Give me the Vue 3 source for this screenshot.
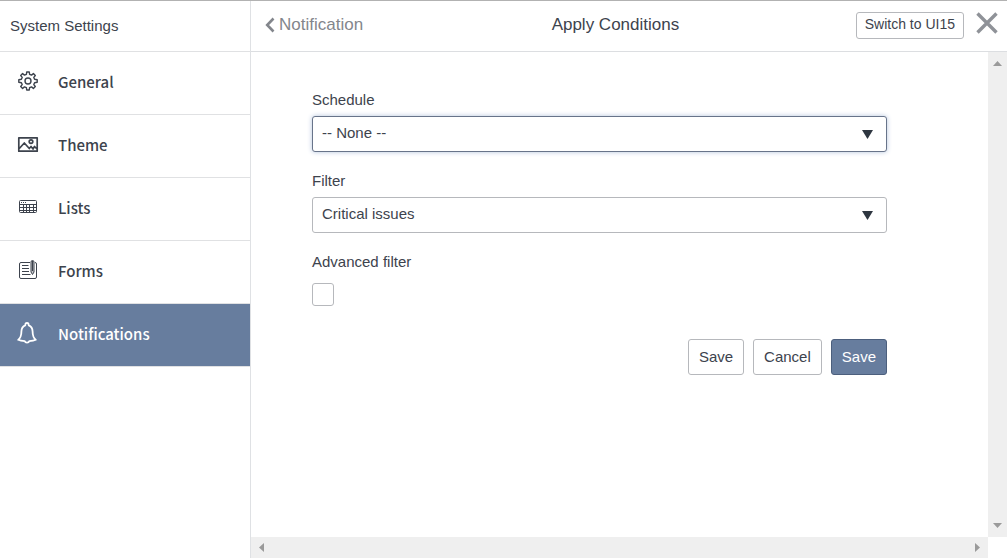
<script setup>
import { ref } from 'vue'

const items = ['General', 'Theme', 'Lists', 'Forms', 'Notifications']
const active = ref('Notifications')
const schedule = ref('-- None --')
const filter = ref('Critical issues')
const advanced = ref(false)
</script>

<template>
  <div class="window">
    <aside class="sidebar">
      <h1 class="sidebar-title">System Settings</h1>
      <nav>
        <button
          v-for="item in items"
          :key="item"
          type="button"
          class="nav-item"
          :class="{ active: item === active }"
          @click="active = item"
        >
          <svg class="nav-icon" viewBox="0 0 22 22" aria-hidden="true">
            <g v-if="item === 'General'">
              <path d="M9.4 4.300 9.700 2h2.600l.3 2.300 1.900.8 1.900-1.500 1.900 1.900-1.500 1.900.8 1.900 2.600.4v2.600l-2.600.4-.8 1.900 1.500 1.900-1.900 1.900-1.900-1.500-1.900.8-.3 2.300H9.700l-.3-2.300-1.900-.8-1.900 1.500-1.900-1.900 1.500-1.900-.8-1.900-2.600-.4V9.700l2.600-.4.8-1.900-1.500-1.900 1.900-1.900 1.900 1.500z" />
              <circle cx="11" cy="11" r="3" />
            </g>
            <g v-else-if="item === 'Theme'" class="medium">
              <path d="M1.800 4.800h18.400v13.400H1.800zM2.300 15.500l5-5.500 5 5.500 1.700-2 2 2.500 1.500-2.500 2.500 2.500" />
              <circle cx="14" cy="8.600" r="1.800" />
            </g>
            <g v-else-if="item === 'Lists'" class="thin">
              <rect x="2.500" y="4.500" width="17" height="12" rx="1" />
              <path d="M2.500 8.500h17M2.500 11.500h17M2.500 14.500h17M6.500 8.500v8M9.500 8.500v8M12.500 8.500v8M16.500 8.500v8M4 6.500h1M6 6.500h1M8 6.500h1" />
            </g>
            <g v-else-if="item === 'Forms'" class="thin">
              <path d="M13 3.500H4Q2.500 3.500 2.500 5v13q0 1.500 1.500 1.500h14q1.500 0 1.500-1.500V5q0-1.500-1.500-1.500M5 6.500h6.500M5 9.500h7M5 12.500h7M5 15.500h8.500" />
              <path class="pen" d="M14 3q0-1.500 1.500-1.500T17 3v10l-1.500 2.500L14 13zM15.500 2v10" />
            </g>
            <path
              v-else
              class="bell"
              d="M8.300 3.300Q8.300 1 10 1t1.700 2.300Q15.500 4.600 15.600 9.500c0 5.300 1.200 6.500 3.200 8.300-1.800.9-3.700 1.200-6.500 1.300-.4 1.300-1.200 1.600-2.300 1.600s-1.900-.3-2.300-1.600c-2.800-.1-4.700-.4-6.500-1.300 2-1.800 3.200-3 3.200-8.300Q4.500 4.600 8.300 3.300z"
            />
          </svg>
          <span>{{ item }}</span>
        </button>
      </nav>
    </aside>

    <main class="panel">
      <header class="panel-header">
        <a href="#" class="back">
          <svg viewBox="0 0 10 16" aria-hidden="true"><path d="M8.500 1.500 2.200 8l6.300 6.500" /></svg>
          <span>Notification</span>
        </a>
        <h2>Apply Conditions</h2>
        <button type="button" class="btn switch">Switch to UI15</button>
        <button type="button" class="close" aria-label="Close">
          <svg viewBox="0 0 22 22" aria-hidden="true"><path d="M1.500 1.500l19 19M20.500 1.500l-19 19" /></svg>
        </button>
      </header>

      <div class="scroll-area">
        <form class="form" @submit.prevent>
          <div class="field">
            <label for="schedule">Schedule</label>
            <div class="select-wrap">
              <select id="schedule" v-model="schedule" class="focused">
                <option>-- None --</option>
              </select>
              <svg class="arrow" viewBox="0 0 11 9" aria-hidden="true"><path d="M0 0h11L5.500 9z" /></svg>
            </div>
          </div>
          <div class="field">
            <label for="filter">Filter</label>
            <div class="select-wrap">
              <select id="filter" v-model="filter">
                <option>Critical issues</option>
              </select>
              <svg class="arrow" viewBox="0 0 11 9" aria-hidden="true"><path d="M0 0h11L5.500 9z" /></svg>
            </div>
          </div>
          <div class="field check">
            <label for="advanced">Advanced filter</label>
            <input id="advanced" v-model="advanced" type="checkbox" />
          </div>
          <div class="actions">
            <button type="button" class="btn">Save</button>
            <button type="button" class="btn">Cancel</button>
            <button type="submit" class="btn primary">Save</button>
          </div>
        </form>
        <div class="track vertical" aria-hidden="true">
          <svg viewBox="0 0 9 5"><path d="M0 5h9L4.500 0z" /></svg>
          <svg viewBox="0 0 9 5"><path d="M0 0h9L4.500 5z" /></svg>
        </div>
        <div class="track horizontal" aria-hidden="true">
          <svg viewBox="0 0 5 9"><path d="M5 0v9L0 4.500z" /></svg>
          <svg viewBox="0 0 5 9"><path d="M0 0v9l5-4.500z" /></svg>
        </div>
      </div>
    </main>
  </div>
</template>

<style>
body {
  margin: 0;
  background: #fff;
}
</style>

<style scoped>
* {
  box-sizing: border-box;
}

.window {
  display: flex;
  min-height: 100vh;
  border-top: 1px solid #b2b2b2;
  color: #3d434d;
  font-family: "Liberation Sans", Arial, sans-serif;
  font-size: 15px;
}

button,
select {
  font: inherit;
  color: inherit;
}

.sidebar {
  flex: 0 0 251px;
  border-right: 1px solid #dfe1e4;
}

.sidebar-title {
  margin: 0;
  height: 51px;
  padding-left: 10px;
  border-bottom: 1px solid #e0e1e3;
  font-size: 15px;
  font-weight: 400;
  line-height: 50px;
}

.nav-item {
  display: flex;
  align-items: center;
  gap: 19px;
  width: 100%;
  height: 63px;
  padding: 0 17px 4px;
  border: 0;
  border-bottom: 1px solid #e0e1e3;
  background: #fff;
  font-family: "Noto Sans CJK SC", "Noto Sans", sans-serif;
  font-size: 15px;
  font-weight: 500;
  cursor: pointer;
}

.nav-item.active {
  background: #677d9e;
  color: #fff;
}

.nav-icon {
  flex: none;
  width: 22px;
  height: 22px;
  fill: none;
  stroke: currentColor;
  stroke-width: 1.4;
  stroke-linejoin: round;
}

.medium {
  stroke-width: 1.7;
}

.thin {
  stroke-width: 1;
}

.pen {
  fill: #c4c6ca;
}

.bell {
  stroke-width: 1.8;
}

.panel {
  display: flex;
  flex: 1;
  flex-direction: column;
  min-width: 0;
}

.panel-header {
  display: flex;
  align-items: center;
  height: 51px;
  padding: 0 9px 2px 14px;
  border-bottom: 1px solid #dcdee1;
}

.back {
  display: flex;
  align-items: center;
  gap: 4px;
  color: #83868c;
  font-size: 17px;
  text-decoration: none;
}

.back svg {
  width: 10px;
  height: 16px;
  fill: none;
  stroke: currentColor;
  stroke-width: 2.6;
}

h2 {
  flex: 1;
  margin: 0;
  padding-left: 12px;
  font-size: 17px;
  font-weight: 400;
  text-align: center;
}

.btn {
  height: 36px;
  padding: 0 10px 2px;
  border: 1px solid #b6b8bc;
  border-radius: 3px;
  background: #fff;
  cursor: pointer;
}

.btn.switch {
  height: 27px;
  padding: 0 8px 2px;
  font-size: 14px;
}

.btn.primary {
  border-color: #4c5f7d;
  background: #677d9e;
  color: #fff;
}

.close {
  display: flex;
  margin-left: 12px;
  padding: 0 0 4px;
  border: 0;
  background: none;
  color: #8f9298;
  cursor: pointer;
}

.close svg {
  width: 22px;
  height: 22px;
  fill: none;
  stroke: currentColor;
  stroke-width: 3.4;
}

.scroll-area {
  display: grid;
  flex: 1;
  grid-template-columns: 1fr 19px;
  grid-template-rows: 1fr 21px;
}

.form {
  padding: 38px 101px 20px 61px;
}

.field {
  display: flex;
  flex-direction: column;
  gap: 6px;
  margin-bottom: 19px;
}

.field label {
  line-height: 20px;
}

.select-wrap {
  display: grid;
  align-items: center;
}

.select-wrap > * {
  grid-area: 1 / 1;
}

select {
  appearance: none;
  width: 100%;
  height: 36px;
  padding: 0 32px 3px 9px;
  border: 1px solid #b6b8bc;
  border-radius: 3px;
  outline: none;
  background: #fff;
}

select.focused {
  border-color: #68748a;
  box-shadow: 0 0 5px #b3c3dc;
}

.arrow {
  justify-self: end;
  width: 11px;
  height: 9px;
  margin-right: 14px;
  fill: #2e3640;
  pointer-events: none;
}

.check {
  gap: 11px;
  margin-bottom: 33px;
}

.check input {
  appearance: none;
  width: 22px;
  height: 23px;
  margin: 0;
  border: 1px solid #b6b8bc;
  border-radius: 3px;
  background: #fff;
}

.check input:checked {
  background: #677d9e;
}

.actions {
  display: flex;
  justify-content: flex-end;
  gap: 9px;
}

.track {
  display: flex;
  align-items: center;
  justify-content: space-between;
  background: #efefef;
}

.track svg {
  fill: #9a9a9a;
}

.vertical {
  flex-direction: column;
  padding: 9px 0;
}

.vertical svg {
  width: 9px;
  height: 5px;
}

.horizontal {
  padding: 0 8px;
}

.horizontal svg {
  width: 5px;
  height: 9px;
}
</style>
